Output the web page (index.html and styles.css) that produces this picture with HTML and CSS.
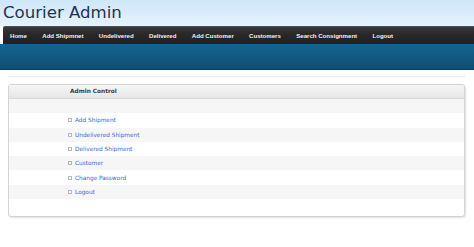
FILE: index.html
```html
<!DOCTYPE html>
<html>
<head>
<meta charset="utf-8">
<link rel="stylesheet" href="styles.css">
</head>
<body>
<header class="top">
  <h1 class="title">Courier Admin</h1>
</header>
<nav class="menu">
  <a href="#">Home</a>
  <a href="#">Add Shipmnet</a>
  <a href="#">Undelivered</a>
  <a href="#">Delivered</a>
  <a href="#">Add Customer</a>
  <a href="#">Customers</a>
  <a href="#">Search Consignment</a>
  <a href="#">Logout</a>
</nav>
<div class="band"></div>
<main class="content">
  <div class="rule"></div>
  <section class="panel">
    <div class="panel-head">Admin Control</div>
    <ul class="rows">
      <li class="row alt"></li>
      <li class="row"><a href="#"><span class="sq"></span>Add Shipment</a></li>
      <li class="row alt"><a href="#"><span class="sq"></span>Undelivered Shipment</a></li>
      <li class="row"><a href="#"><span class="sq"></span>Delivered Shipment</a></li>
      <li class="row alt"><a href="#"><span class="sq"></span>Customer</a></li>
      <li class="row"><a href="#"><span class="sq"></span>Change Password</a></li>
      <li class="row alt"><a href="#"><span class="sq"></span>Logout</a></li>
      <li class="row"></li>
    </ul>
  </section>
</main>
</body>
</html>
```
FILE: styles.css
```css
* { box-sizing: border-box; }
html, body { margin: 0; padding: 0; background: #fff; }
body { width: 474px; height: 247px; overflow: hidden; font-family: "DejaVu Sans", Verdana, sans-serif; }

.top {
  height: 26px;
  background: linear-gradient(to bottom, #cfe6f9 0%, #dcedfb 60%, #e4f2fc 100%);
  padding-left: 3px;
}
.title {
  margin: 0;
  font-family: "DejaVu Sans", sans-serif;
  font-weight: normal;
  font-size: 16.6px;
  line-height: 26px;
  color: #1b3552;
  letter-spacing: 0;
}

.menu {
  height: 18px;
  margin-left: 3px;
  background: linear-gradient(to bottom, #3a3a3a 0%, #2a2828 40%, #221f1f 100%);
  border-top: 1px solid #4a5055;
  border-top-left-radius: 2px;
  display: flex;
  align-items: center;
  padding-left: 7px;
  gap: 15.3px;
}
.menu a {
  font-family: "Liberation Sans", Arial, sans-serif;
  font-weight: bold;
  font-size: 6.1px;
  color: #f2f2f2;
  text-decoration: none;
  white-space: nowrap;
}

.band {
  height: 26px;
  background: linear-gradient(to bottom, #166491 0%, #125a85 50%, #0e4c73 100%);
  border-bottom: 1px solid #0c3d5c;
}

.content {
  padding: 6px 9px 0 8px;
}
.rule {
  height: 2px;
  border-top: 1px solid #eceeee;
  background: #f7f8f8;
  margin-bottom: 6px;
}

.panel {
  height: 133px;
  border: 1px solid #d3d3d3;
  border-radius: 3px;
  box-shadow: 1px 1px 2px rgba(0,0,0,0.12);
  overflow: hidden;
  background: #fff;
}
.panel-head {
  height: 14px;
  background: linear-gradient(to bottom, #f6f6f6 0%, #e6e6e6 100%);
  border-bottom: 1px solid #d8d8d8;
  padding-left: 61px;
  font-size: 5.8px;
  font-weight: bold;
  color: #3a3a3a;
  line-height: 13px;
}
.rows {
  list-style: none;
  margin: 0;
  padding: 0;
}
.row {
  height: 14.3px;
  display: flex;
  align-items: center;
  padding-left: 59px;
}
.row.alt { background: #f6f6f6; }
.row a {
  font-size: 5.8px;
  color: #3b68d6;
  text-decoration: none;
  display: flex;
  align-items: center;
  white-space: nowrap;
}
.sq {
  display: inline-block;
  width: 4px;
  height: 4px;
  border: 1px solid #b4b8c4;
  margin-right: 3px;
}
```
